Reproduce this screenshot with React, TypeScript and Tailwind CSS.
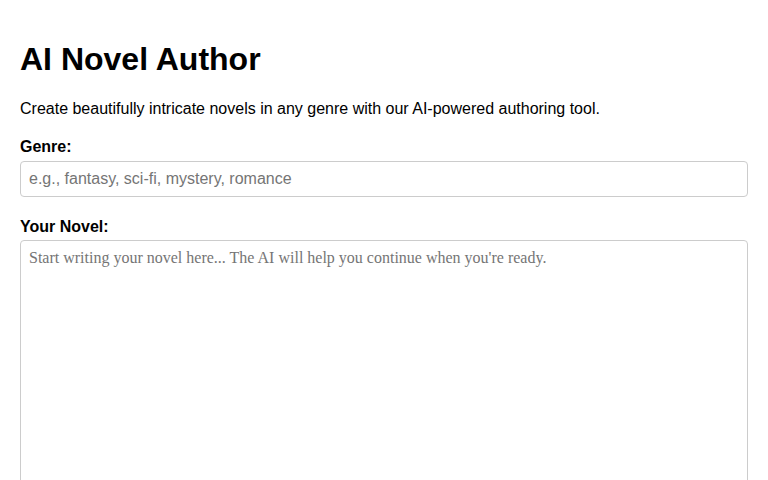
import { useState } from "react";

export default function App() {
  const [genre, setGenre] = useState("");
  const [novel, setNovel] = useState("");

  return (
    <main className="min-h-screen bg-white px-5 pt-[41px] text-black [font-family:'Liberation_Sans',Arial,sans-serif]">
      <h1 className="text-[32px] font-bold leading-[37px]">AI Novel Author</h1>
      <p className="mt-[22px] text-base leading-[18px]">
        Create beautifully intricate novels in any genre with our AI-powered authoring tool.
      </p>

      <label htmlFor="genre" className="mt-5 mb-[5px] block text-base font-bold leading-[18px]">
        Genre:
      </label>
      <input
        id="genre"
        type="text"
        value={genre}
        onChange={(e) => setGenre(e.target.value)}
        placeholder="e.g., fantasy, sci-fi, mystery, romance"
        className="block h-9 w-full rounded border border-[#ccc] px-2 text-base outline-none placeholder:text-[#757575]"
      />

      <label htmlFor="novel" className="mt-[21px] mb-1 block text-base font-bold leading-[18px]">
        Your Novel:
      </label>
      <textarea
        id="novel"
        value={novel}
        onChange={(e) => setNovel(e.target.value)}
        placeholder="Start writing your novel here... The AI will help you continue when you're ready."
        className="block h-[320px] w-full resize-none rounded border border-[#ccc] px-2 py-2 text-base leading-[18px] outline-none [font-family:'Liberation_Serif','Times_New_Roman',serif] placeholder:text-[#757575]"
      />
    </main>
  );
}
